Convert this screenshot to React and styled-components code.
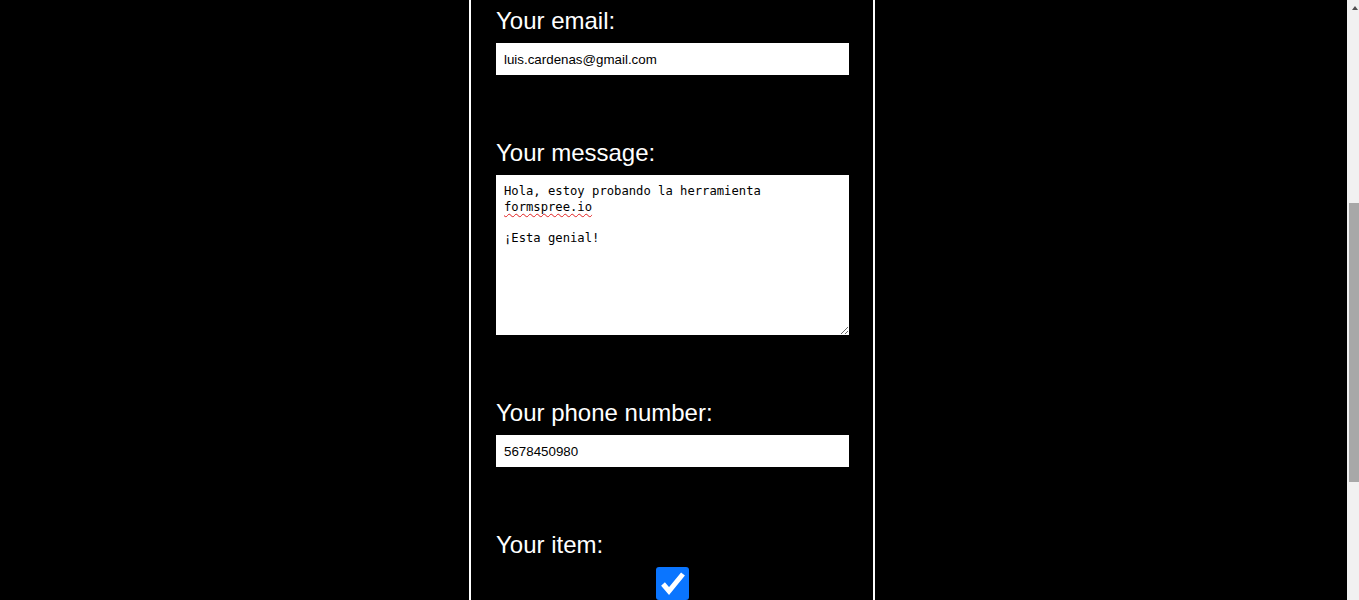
import React, { useLayoutEffect, useRef } from 'react';
import styled, { createGlobalStyle } from 'styled-components';

const Global = createGlobalStyle`
  html, body {
    margin: 0;
    padding: 0;
    background: #000;
  }
  body {
    font-family: "Liberation Sans", Arial, sans-serif;
    color: #fff;
  }
`;

const Page = styled.div`
  padding-right: 15px;
`;

const Column = styled.form`
  box-sizing: border-box;
  width: 406px;
  margin: 0 auto;
  border-left: 2px solid #fff;
  border-right: 2px solid #fff;
  padding: 40px 24px 420px 25px;
  display: flex;
  flex-direction: column;
  gap: 63px;
  min-height: 100vh;
`;

const Title = styled.h1`
  font-size: 32px;
  font-weight: normal;
  margin: 0;
  text-align: center;
`;

const Field = styled.div`
  display: flex;
  flex-direction: column;
`;

const Label = styled.label`
  display: block;
  font-size: 24px;
  line-height: 28px;
  padding-top: 1px;
  margin-bottom: 8px;
`;

const Input = styled.input`
  box-sizing: border-box;
  width: 100%;
  height: 32px;
  border: none;
  outline: none;
  padding: 0 8px;
  background: #fff;
  color: #000;
  font-family: "Liberation Sans", Arial, sans-serif;
  font-size: 13.33px;
`;

const AreaWrap = styled.div`
  position: relative;
`;

const Area = styled.textarea`
  display: block;
  box-sizing: border-box;
  width: 100%;
  height: 160px;
  border: none;
  outline: none;
  padding: 9px 8px 8px;
  background: #fff;
  color: #000;
  font-family: "DejaVu Sans Mono", monospace;
  font-size: 12.2px;
  line-height: 15.6px;
  resize: both;
`;

const Squiggle = styled.span`
  position: absolute;
  left: 8px;
  top: 24.6px;
  font-family: "DejaVu Sans Mono", monospace;
  font-size: 12.2px;
  line-height: 15.6px;
  color: transparent;
  text-decoration: underline wavy #e02020;
  text-decoration-thickness: 1px;
  text-decoration-skip-ink: none;
  text-underline-offset: 2px;
  pointer-events: none;
`;

const CheckRow = styled.label`
  display: flex;
  justify-content: center;
`;

const HiddenBox = styled.input`
  position: absolute;
  opacity: 0;
  width: 0;
  height: 0;
`;

const Box = styled.span`
  width: 33px;
  height: 33px;
  border-radius: 3px;
  background: ${p => (p.$on ? '#0a75ff' : '#fff')};
  display: flex;
  align-items: center;
  justify-content: center;
`;

const Send = styled.button`
  align-self: center;
  font-family: "Liberation Sans", Arial, sans-serif;
  font-size: 20px;
  padding: 8px 32px;
  background: #fff;
  color: #000;
  border: none;
`;

/* the window's own scroll bar, drawn since the headless browser hides it */
const ScrollTrack = styled.div`
  position: fixed;
  top: 0;
  right: 0;
  width: 12px;
  height: 100vh;
  background: #f1f1f1;
`;

const ScrollArrow = styled.div`
  position: absolute;
  top: 6px;
  left: 5px;
  width: 0;
  height: 0;
  border-left: 3.5px solid transparent;
  border-right: 3.5px solid transparent;
  border-bottom: 4px solid #505050;
`;

const ScrollThumb = styled.div`
  position: absolute;
  top: 203px;
  left: 2px;
  right: 0;
  height: 279px;
  background: #a8a8a8;
`;

export default function App() {
  const emailRef = useRef(null);

  useLayoutEffect(() => {
    const el = emailRef.current;
    if (el) {
      const top = el.getBoundingClientRect().top + window.scrollY;
      window.scrollTo(0, top - 6);
    }
  }, []);

  return (
    <Page>
      <Global />
      <Column onSubmit={e => e.preventDefault()}>
        <Title>Contact me</Title>
        <Field>
          <Label>Your name:</Label>
          <Input type="text" defaultValue="Luis Cárdenas" />
        </Field>
        <Field ref={emailRef}>
          <Label>Your email:</Label>
          <Input type="email" defaultValue="luis.cardenas@gmail.com" />
        </Field>
        <Field>
          <Label>Your message:</Label>
          <AreaWrap>
            <Area
              spellCheck={false}
              defaultValue={'Hola, estoy probando la herramienta\nformspree.io\n\n¡Esta genial!'}
            />
            <Squiggle>formspree.io</Squiggle>
          </AreaWrap>
        </Field>
        <Field>
          <Label>Your phone number:</Label>
          <Input type="tel" defaultValue="5678450980" />
        </Field>
        <Field>
          <Label>Your item:</Label>
          <CheckRow>
            <HiddenBox type="checkbox" defaultChecked />
            <Box $on>
              <svg width="33" height="33" viewBox="0 0 33 33">
                <path d="M7 17 L13 24 L27 7" fill="none" stroke="#fff" strokeWidth="5" />
              </svg>
            </Box>
          </CheckRow>
        </Field>
        <Send type="submit">Send</Send>
      </Column>
      <ScrollTrack>
        <ScrollArrow />
        <ScrollThumb />
      </ScrollTrack>
    </Page>
  );
}
